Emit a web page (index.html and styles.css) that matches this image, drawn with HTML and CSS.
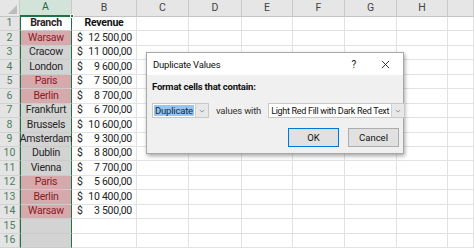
FILE: index.html
```html
<!DOCTYPE html>
<html lang="en">
<head>
  <meta charset="UTF-8" />
  <title>Duplicate Values</title>
  <link rel="stylesheet" href="styles.css">
</head>
<body>
  <div class="sheet">
    <div class="row head">
      <div class="c corner"><span class="tri"></span></div>
      <div class="c col-sel">A</div>
      <div class="c">B</div>
      <div class="c">C</div>
      <div class="c">D</div>
      <div class="c">E</div>
      <div class="c">F</div>
      <div class="c">G</div>
      <div class="c">H</div>
      <div class="c"></div>
    </div>

    <div class="row">
      <div class="c rn">1</div>
      <div class="c a active"><b>Branch</b><span class="handle"></span></div>
      <div class="c hd"><b>Revenue</b></div>
      <div class="c"></div><div class="c"></div><div class="c"></div><div class="c"></div><div class="c"></div><div class="c"></div><div class="c"></div>
    </div>
    <div class="row">
      <div class="c rn">2</div>
      <div class="c a dup">Warsaw</div>
      <div class="c money"><span>$</span><span>12 500,00</span></div>
      <div class="c"></div><div class="c"></div><div class="c"></div><div class="c"></div><div class="c"></div><div class="c"></div><div class="c"></div>
    </div>
    <div class="row">
      <div class="c rn">3</div>
      <div class="c a">Cracow</div>
      <div class="c money"><span>$</span><span>11 000,00</span></div>
      <div class="c"></div><div class="c"></div><div class="c"></div><div class="c"></div><div class="c"></div><div class="c"></div><div class="c"></div>
    </div>
    <div class="row">
      <div class="c rn">4</div>
      <div class="c a">London</div>
      <div class="c money"><span>$</span><span>9 600,00</span></div>
      <div class="c"></div><div class="c"></div><div class="c"></div><div class="c"></div><div class="c"></div><div class="c"></div><div class="c"></div>
    </div>
    <div class="row">
      <div class="c rn">5</div>
      <div class="c a dup">Paris</div>
      <div class="c money"><span>$</span><span>7 500,00</span></div>
      <div class="c"></div><div class="c"></div><div class="c"></div><div class="c"></div><div class="c"></div><div class="c"></div><div class="c"></div>
    </div>
    <div class="row">
      <div class="c rn">6</div>
      <div class="c a dup">Berlin</div>
      <div class="c money"><span>$</span><span>8 700,00</span></div>
      <div class="c"></div><div class="c"></div><div class="c"></div><div class="c"></div><div class="c"></div><div class="c"></div><div class="c"></div>
    </div>
    <div class="row">
      <div class="c rn">7</div>
      <div class="c a">Frankfurt</div>
      <div class="c money"><span>$</span><span>6 700,00</span></div>
      <div class="c"></div><div class="c"></div><div class="c"></div><div class="c"></div><div class="c"></div><div class="c"></div><div class="c"></div>
    </div>
    <div class="row">
      <div class="c rn">8</div>
      <div class="c a">Brussels</div>
      <div class="c money"><span>$</span><span>10 600,00</span></div>
      <div class="c"></div><div class="c"></div><div class="c"></div><div class="c"></div><div class="c"></div><div class="c"></div><div class="c"></div>
    </div>
    <div class="row">
      <div class="c rn">9</div>
      <div class="c a">Amsterdam</div>
      <div class="c money"><span>$</span><span>9 300,00</span></div>
      <div class="c"></div><div class="c"></div><div class="c"></div><div class="c"></div><div class="c"></div><div class="c"></div><div class="c"></div>
    </div>
    <div class="row">
      <div class="c rn">10</div>
      <div class="c a">Dublin</div>
      <div class="c money"><span>$</span><span>8 800,00</span></div>
      <div class="c"></div><div class="c"></div><div class="c"></div><div class="c"></div><div class="c"></div><div class="c"></div><div class="c"></div>
    </div>
    <div class="row">
      <div class="c rn">11</div>
      <div class="c a">Vienna</div>
      <div class="c money"><span>$</span><span>7 700,00</span></div>
      <div class="c"></div><div class="c"></div><div class="c"></div><div class="c"></div><div class="c"></div><div class="c"></div><div class="c"></div>
    </div>
    <div class="row">
      <div class="c rn">12</div>
      <div class="c a dup">Paris</div>
      <div class="c money"><span>$</span><span>5 600,00</span></div>
      <div class="c"></div><div class="c"></div><div class="c"></div><div class="c"></div><div class="c"></div><div class="c"></div><div class="c"></div>
    </div>
    <div class="row">
      <div class="c rn">13</div>
      <div class="c a dup">Berlin</div>
      <div class="c money"><span>$</span><span>10 400,00</span></div>
      <div class="c"></div><div class="c"></div><div class="c"></div><div class="c"></div><div class="c"></div><div class="c"></div><div class="c"></div>
    </div>
    <div class="row">
      <div class="c rn">14</div>
      <div class="c a dup">Warsaw</div>
      <div class="c money"><span>$</span><span>3 500,00</span></div>
      <div class="c"></div><div class="c"></div><div class="c"></div><div class="c"></div><div class="c"></div><div class="c"></div><div class="c"></div>
    </div>
    <div class="row">
      <div class="c rn">15</div>
      <div class="c a"></div>
      <div class="c"></div><div class="c"></div><div class="c"></div><div class="c"></div><div class="c"></div><div class="c"></div><div class="c"></div><div class="c"></div>
    </div>
    <div class="row">
      <div class="c rn">16</div>
      <div class="c a"></div>
      <div class="c"></div><div class="c"></div><div class="c"></div><div class="c"></div><div class="c"></div><div class="c"></div><div class="c"></div><div class="c"></div>
    </div>

    <div class="dialog">
      <div class="dlg-title">
        <span>Duplicate Values</span>
        <span class="dlg-help">?</span>
        <svg class="dlg-close" viewBox="0 0 10 10"><path d="M1 1 L9 9 M9 1 L1 9" /></svg>
      </div>
      <div class="dlg-body">
        <div class="dlg-label">Format cells that contain:</div>
        <div class="dlg-line">
          <div class="select small">
            <span class="sel-text picked">Duplicate</span>
            <span class="sel-arrow"><svg viewBox="0 0 8 5"><path d="M1 1 L4 4 L7 1" /></svg></span>
          </div>
          <span class="with">values with</span>
          <div class="select wide">
            <span class="sel-text">Light Red Fill with Dark Red Text</span>
            <span class="sel-arrow"><svg viewBox="0 0 8 5"><path d="M1 1 L4 4 L7 1" /></svg></span>
          </div>
        </div>
        <div class="dlg-buttons">
          <button class="btn default">OK</button>
          <button class="btn">Cancel</button>
        </div>
      </div>
    </div>
  </div>
</body>
</html>
```

FILE: styles.css
```css
* {
  margin: 0;
  padding: 0;
  box-sizing: border-box;
}

body {
  background: #fff;
  font-family: Roboto, "Liberation Sans", sans-serif;
  color: #222;
  overflow: hidden;
}

.sheet {
  position: relative;
  width: 474px;
  height: 248px;
}

.row {
  display: grid;
  grid-template-columns: 20px 52px 65px 52px 53px 51px 52px 52px 51px 26px;
  height: 14.45px;
  font-size: 10.5px;
  letter-spacing: -0.25px;
}

.c {
  border-right: 1px solid #e2e2e2;
  border-bottom: 1px solid #e2e2e2;
  display: flex;
  align-items: center;
  justify-content: center;
  white-space: nowrap;
  overflow: hidden;
  line-height: 1;
}

/* column headers */
.row.head {
  height: 17px;
  background: #e6e6e6;
  color: #444;
  font-size: 10.5px;
  letter-spacing: 0;
}

.head .c {
  border-right: 1px solid #cacaca;
  border-bottom: 1px solid #c4c4c4;
}

.corner {
  position: relative;
}

.tri {
  position: absolute;
  right: 2px;
  bottom: 2px;
  width: 0;
  height: 0;
  border-left: 9px solid transparent;
  border-bottom: 9px solid #bdbdbd;
}

.head .col-sel {
  background: #d2e4da;
  color: #1e6b41;
  border-bottom: 2px solid #217346;
}

/* row numbers */
.rn {
  background: #e4e4e4;
  color: #4e7d62;
  font-size: 10.5px;
  letter-spacing: 0;
  border-right: 1px solid #c4c4c4;
  border-bottom: 1px solid #d2d2d2;
}

/* selected column A */
.c.a {
  background: #d3d3d3;
  color: #262626;
  border-left: 1px solid #217346;
  border-right: 1px solid #217346;
  border-bottom: 1px solid #cbcbcb;
  overflow: visible;
}

.c.a.active {
  background: #fff;
  position: relative;
}

.handle {
  position: absolute;
  right: -3px;
  top: -3px;
  width: 4px;
  height: 4px;
  background: #217346;
  border: 1px solid #fff;
}

.c.a.dup {
  background: #d6a9ad;
  color: #8c1a22;
}

.hd {
  color: #111;
}

.money {
  justify-content: space-between;
  padding: 0 4px 0 5px;
  color: #222;
}

/* dialog */
.dialog {
  position: absolute;
  left: 146px;
  top: 52px;
  width: 258px;
  height: 102px;
  background: #f0f0f0;
  border: 1px solid #a8a8a8;
  box-shadow: 1px 2px 4px rgba(0, 0, 0, 0.35);
  font-family: Roboto, "Liberation Sans", sans-serif;
  font-size: 9.5px;
  letter-spacing: -0.2px;
  color: #111;
  display: flex;
  flex-direction: column;
}

.dlg-title {
  background: #fff;
  height: 22px;
  flex: none;
  display: flex;
  align-items: center;
  padding: 0 0 0 6px;
  font-size: 9.5px;
}

.dlg-help {
  margin-left: auto;
  margin-right: 25px;
  font-size: 10px;
}

.dlg-close {
  width: 9px;
  height: 9px;
  margin-right: 13px;
  stroke: #222;
  stroke-width: 1;
  fill: none;
}

.dlg-body {
  flex: 1;
  padding: 6px 4px 0 5px;
}

.dlg-label {
  font-weight: bold;
  font-size: 9.5px;
  height: 12px;
  line-height: 12px;
}

.dlg-line {
  display: flex;
  align-items: center;
  margin-top: 10px;
  white-space: nowrap;
}

.select {
  display: flex;
  height: 15px;
  background: #fff;
  border: 1px solid #c8c8c8;
  flex: none;
}

.select.small {
  width: 57px;
}

.select.wide {
  width: 137px;
  margin-left: 7px;
}

.sel-text {
  flex: 1;
  display: flex;
  align-items: center;
  padding-left: 2px;
  font-size: 9.5px;
  white-space: nowrap;
  overflow: hidden;
}

.wide .sel-text {
  font-size: 9px;
  letter-spacing: -0.3px;
}

.sel-text.picked {
  background: #99c4ec;
  color: #0c2a55;
  margin: 1px;
  padding-left: 1px;
}

.sel-arrow {
  width: 13px;
  flex: none;
  display: flex;
  align-items: center;
  justify-content: center;
  background: #e8e8e8;
  border-left: 1px solid #cfcfcf;
}

.sel-arrow svg {
  width: 6px;
  height: 4px;
  stroke: #777;
  fill: none;
  stroke-width: 1;
}

.with {
  font-size: 9.5px;
  color: #333;
  margin-left: 7px;
}

.dlg-buttons {
  display: flex;
  justify-content: flex-end;
  gap: 9px;
  margin-top: 10px;
}

.btn {
  width: 51px;
  height: 19px;
  background: #e1e1e1;
  border: 1px solid #adadad;
  font-family: Roboto, "Liberation Sans", sans-serif;
  font-size: 9.5px;
  color: #111;
}

.btn.default {
  border: 1px solid #0078d7;
  box-shadow: inset 0 0 0 1px #cfe3f7;
}
```
